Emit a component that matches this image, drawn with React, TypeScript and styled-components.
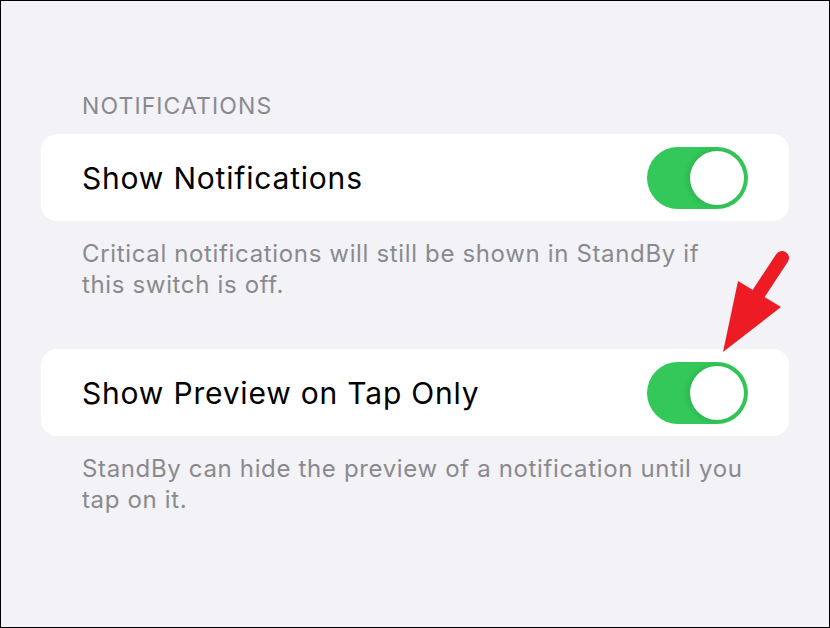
import { Fragment } from 'react';
import styled, { createGlobalStyle } from 'styled-components';

const GlobalStyle = createGlobalStyle`
  html, body {
    margin: 0;
    padding: 0;
    background: #f2f2f7;
  }
`;

type Setting = {
  label: string;
  footer: string[];
  on: boolean;
};

const settings: Setting[] = [
  {
    label: 'Show Notifications',
    footer: ['Critical notifications will still be shown in StandBy if', 'this switch is off.'],
    on: true,
  },
  {
    label: 'Show Preview on Tap Only',
    footer: ['StandBy can hide the preview of a notification until you', 'tap on it.'],
    on: true,
  },
];

const Toggle = ({ on }: { on: boolean }) => (
  <Track $on={on}>
    <Knob $on={on} />
  </Track>
);

// red callout arrow pointing down at the second switch
const Pointer = () => (
  <ArrowSvg width="100" height="110" viewBox="0 0 100 110">
    <line x1="83" y1="12" x2="58" y2="50" stroke="#ed1c24" strokeWidth="14" strokeLinecap="round" />
    <polygon points="39,35 82,61 24,106" fill="#ed1c24" />
  </ArrowSvg>
);

const App = () => {
  return (
    <>
      <GlobalStyle />
      <Screen>
        <SectionTitle>NOTIFICATIONS</SectionTitle>
        {settings.map((s, i) => (
          <Group key={s.label} $first={i === 0}>
            <Card>
              <RowLabel>{s.label}</RowLabel>
              <Toggle on={s.on} />
              {i === 1 && <Pointer />}
            </Card>
            <Footer>
              {s.footer.map((line, j) => (
                <Fragment key={j}>
                  {j > 0 && <br />}
                  {line}
                </Fragment>
              ))}
            </Footer>
          </Group>
        ))}
      </Screen>
    </>
  );
};

const Screen = styled.div`
  box-sizing: border-box;
  width: 830px;
  height: 628px;
  border: 1px solid #000;
  background: #f2f2f7;
  padding: 91px 40px 0 40px;
  font-family: Inter, 'Liberation Sans', sans-serif;
`;

const SectionTitle = styled.div`
  padding-left: 41px;
  font-size: 23px;
  line-height: 28px;
  color: #8a8a8e;
  letter-spacing: 1.1px;
  margin-bottom: 14px;
`;

const Group = styled.div<{ $first: boolean }>`
  margin-top: ${({ $first }) => ($first ? '0' : '49px')};
`;

const Card = styled.div`
  position: relative;
  height: 87px;
  background: #fff;
  border-radius: 16px;
  display: flex;
  align-items: center;
  justify-content: space-between;
  padding: 0 41px 0 41px;
`;

const RowLabel = styled.div`
  font-size: 30px;
  color: #000;
  letter-spacing: 0.8px;
`;

const Track = styled.div<{ $on: boolean }>`
  width: 101px;
  height: 62px;
  border-radius: 31px;
  background: ${({ $on }) => ($on ? '#34c759' : '#e9e9ea')};
  display: flex;
  align-items: center;
  justify-content: ${({ $on }) => ($on ? 'flex-end' : 'flex-start')};
  padding: 0 4px;
  box-sizing: border-box;
`;

const Knob = styled.div<{ $on: boolean }>`
  width: 54px;
  height: 54px;
  border-radius: 50%;
  background: #fff;
  box-shadow: -2px 0 6px rgba(0, 0, 0, 0.12);
`;

const ArrowSvg = styled.svg`
  position: absolute;
  right: -10px;
  top: -103px;
`;

const Footer = styled.div`
  padding: 17px 20px 0 41px;
  font-size: 24px;
  line-height: 31px;
  color: #8a8a8e;
  letter-spacing: 0.65px;
  white-space: nowrap;
`;

export default App;
